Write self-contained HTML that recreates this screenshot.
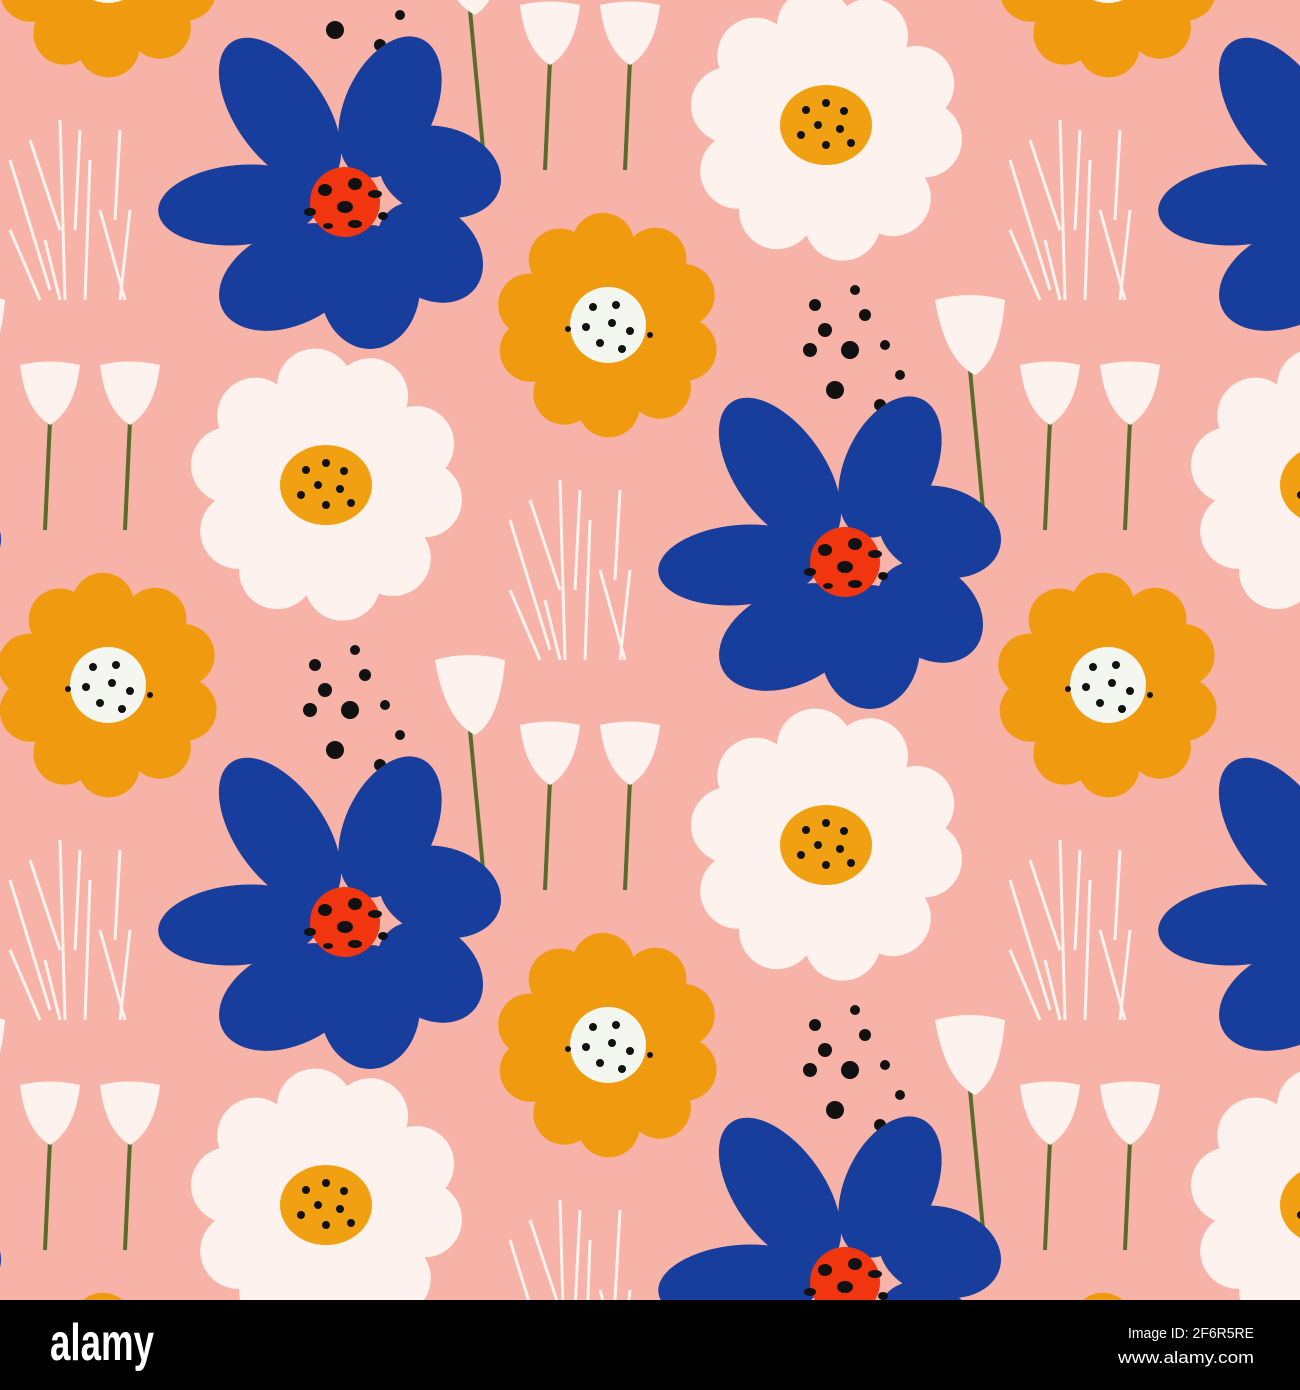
<!DOCTYPE html>
<html><head><meta charset="utf-8"><style>
html,body{margin:0;padding:0;background:#000;overflow:hidden}
svg{display:block}
</style></head><body>
<svg width="1300" height="1390" viewBox="0 0 1300 1390" xmlns="http://www.w3.org/2000/svg">
<defs>
<g id="blue">
 <g fill="#173d9d">
  <ellipse cx="-105" cy="3" rx="82" ry="40" transform="rotate(-5 -105 3)"/>
  <ellipse cx="-65" cy="-90" rx="85" ry="45" transform="rotate(55 -65 -90)"/>
  <ellipse cx="45" cy="-95" rx="75" ry="45" transform="rotate(-65 45 -95)"/>
  <ellipse cx="95" cy="-30" rx="62" ry="45" transform="rotate(15 95 -30)"/>
  <ellipse cx="85" cy="50" rx="58" ry="45" transform="rotate(40 85 50)"/>
  <ellipse cx="25" cy="85" rx="50" ry="62"/>
  <ellipse cx="-55" cy="75" rx="75" ry="48" transform="rotate(-25 -55 75)"/>
 </g>
 <circle r="35" fill="#f0350f"/>
 <g fill="#111"><ellipse cx="-20" cy="-12" rx="7" ry="6"/><ellipse cx="10" cy="-18" rx="7" ry="6"/><ellipse cx="0" cy="5" rx="8" ry="6"/><ellipse cx="10" cy="22" rx="7" ry="4"/><ellipse cx="30" cy="-8" rx="7" ry="4"/><ellipse cx="-35" cy="10" rx="6" ry="4"/><ellipse cx="38" cy="14" rx="5" ry="4"/><ellipse cx="-17" cy="24" rx="5" ry="3"/></g>
</g>
<g id="heart5">
 <circle cx="-28" cy="-95" r="38"/><circle cx="28" cy="-95" r="38"/><path d="M-62 -80 Q-40 -30 0 -5 Q40 -30 62 -80Z"/>
</g>
<g id="white">
 <g fill="#fdf2ee">
  <use href="#heart5" transform="rotate(10)"/><use href="#heart5" transform="rotate(82)"/><use href="#heart5" transform="rotate(154)"/><use href="#heart5" transform="rotate(226)"/><use href="#heart5" transform="rotate(298)"/>
 </g>
 <ellipse rx="46" ry="40" fill="#f0a010"/>
 <g fill="#111"><circle cx="-20" cy="-15" r="4"/><circle cx="0" cy="-22" r="4"/><circle cx="18" cy="-14" r="4"/><circle cx="-8" cy="0" r="4"/><circle cx="14" cy="4" r="4"/><circle cx="-25" cy="10" r="4"/><circle cx="0" cy="20" r="4"/><circle cx="25" cy="18" r="4"/></g>
</g>
<g id="orange">
 <g fill="#f09b0f" transform="scale(0.82)">
  <use href="#heart5" transform="rotate(-20)"/><use href="#heart5" transform="rotate(52)"/><use href="#heart5" transform="rotate(124)"/><use href="#heart5" transform="rotate(196)"/><use href="#heart5" transform="rotate(268)"/>
 </g>
 <circle r="38" fill="#f4f7f0"/>
 <g fill="#111"><circle cx="-15" cy="-18" r="4"/><circle cx="8" cy="-20" r="4"/><circle cx="-22" cy="2" r="4"/><circle cx="4" cy="-2" r="4"/><circle cx="22" cy="6" r="4"/><circle cx="-8" cy="18" r="4"/><circle cx="14" cy="24" r="4"/><circle cx="-40" cy="4" r="3"/><circle cx="42" cy="10" r="3"/></g>
</g>
<g id="tulip">
 <path d="M0 40 L15 200" stroke="#5a6b2a" stroke-width="4"/>
 <path d="M-35 -30 Q0 -40 35 -30 Q30 30 5 45 Q-25 30 -35 -30Z" fill="#fdf2ee"/>
</g>
<g id="stulip">
 <path d="M0 30 L-5 140" stroke="#5a6b2a" stroke-width="4"/>
 <path d="M-30 -25 Q0 -32 30 -25 Q25 20 0 35 Q-25 20 -30 -25Z" fill="#fdf2ee"/>
</g>
<g id="grass" stroke="#fdf2ee" stroke-width="3" fill="none">
 <path d="M-60 -60 L-20 70"/><path d="M-40 -80 L-10 10"/><path d="M-10 -100 L-5 80"/><path d="M10 -90 L5 10"/><path d="M20 -60 L15 80"/><path d="M50 -90 L45 0"/><path d="M-60 10 L-30 80"/><path d="M30 -10 L55 80"/><path d="M60 -10 L50 80"/><path d="M-25 20 L-10 80"/>
</g>
<g id="dots" fill="#111">
 <circle cx="-40" cy="-45" r="6"/><circle cx="0" cy="-60" r="5"/><circle cx="-30" cy="-20" r="7"/><circle cx="10" cy="-35" r="6"/><circle cx="-45" cy="0" r="7"/><circle cx="-5" cy="0" r="9"/><circle cx="30" cy="-5" r="5"/><circle cx="-20" cy="40" r="9"/><circle cx="25" cy="55" r="6"/><circle cx="45" cy="25" r="5"/>
</g>
<g id="tile">
 <use href="#grass" x="-275" y="18"/>
 <use href="#dots" x="510" y="148"/>
 <use href="#tulip" x="625" y="128"/>
 <use href="#stulip" x="705" y="188"/>
 <use href="#stulip" x="785" y="188"/>
 <use href="#orange" x="263" y="123"/>
 <use href="#white" x="481" y="-77"/>
 <use href="#blue"/>
</g>
</defs>
<rect width="1300" height="1300" fill="#f8b3a8"/>
<use href="#tile" x="345" y="-518"/><use href="#tile" x="-655" y="-518"/><use href="#tile" x="1345" y="-518"/>
<use href="#tile" x="-155" y="-158"/><use href="#tile" x="845" y="-158"/>
<use href="#tile" x="345" y="202"/><use href="#tile" x="1345" y="202"/><use href="#tile" x="-655" y="202"/>
<use href="#tile" x="-155" y="562"/><use href="#tile" x="845" y="562"/>
<use href="#tile" x="345" y="922"/><use href="#tile" x="1345" y="922"/><use href="#tile" x="-655" y="922"/>
<use href="#tile" x="-155" y="1282"/><use href="#tile" x="845" y="1282"/>
<rect y="1300" width="1300" height="90" fill="#000"/>
<text x="50" y="1360" fill="#fff" font-family="Liberation Sans, sans-serif" font-weight="bold" font-size="52" textLength="104" lengthAdjust="spacingAndGlyphs">alamy</text>
<text x="1254" y="1338" fill="#fff" font-family="Liberation Sans, sans-serif" font-size="15" text-anchor="end" textLength="126" lengthAdjust="spacingAndGlyphs">Image ID: 2F6R5RE</text>
<text x="1254" y="1363" fill="#fff" font-family="Liberation Sans, sans-serif" font-size="17" text-anchor="end" textLength="136" lengthAdjust="spacingAndGlyphs">www.alamy.com</text>
</svg>
</body></html>
